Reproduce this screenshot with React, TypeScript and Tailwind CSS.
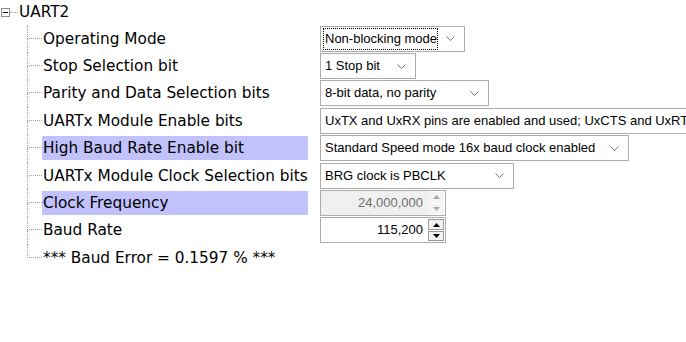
import React from "react";

type Row = {
  label: string;
  highlight?: boolean;
  control: React.ReactNode;
};

function Chevron() {
  return (
    <svg width="9" height="5" viewBox="0 0 9 5" className="shrink-0">
      <path d="M0.5 0.5 L4.5 4.5 L8.5 0.5" fill="none" stroke="#7a7a7a" strokeWidth="1" />
    </svg>
  );
}

function Combo({
  text,
  width,
  focused,
}: {
  text: string;
  width: string;
  focused?: boolean;
}) {
  return (
    <div
      className={`${width} h-[26px] bg-white border border-[#acacac] flex items-center justify-between pl-[2px] pr-[9px] gap-2 shrink-0`}
    >
      <span
        className={`whitespace-nowrap overflow-hidden px-[1px] h-[22px] leading-[20px] ${
          focused ? "border border-dotted border-black" : "flex-1 border border-transparent"
        }`}
      >
        {text}
      </span>
      <Chevron />
    </div>
  );
}

function Spinner({ value, disabled }: { value: string; disabled?: boolean }) {
  const tri = disabled ? "#a8a8a8" : "#000000";
  return (
    <div
      className={`w-[126px] h-[26px] border border-[#acacac] flex items-stretch ${
        disabled ? "bg-[#f0f0f0]" : "bg-white"
      }`}
    >
      <span
        className={`flex-1 text-right pr-[5px] leading-[24px] ${
          disabled ? "text-[#6d6d6d]" : "text-black"
        }`}
      >
        {value}
      </span>
      <div className="w-[17px] flex flex-col py-[1px] pr-[1px] gap-[1px] bg-white">
        {[0, 1].map((i) => (
          <div
            key={i}
            className={`flex-1 flex items-center justify-center ${
              disabled ? "bg-[#f4f4f4]" : "bg-[#f2f2f2] border border-[#9a9a9a]"
            }`}
          >
            <svg width="7" height="4" viewBox="0 0 7 4">
              <path d={i === 0 ? "M0 4 L3.5 0 L7 4 Z" : "M0 0 L3.5 4 L7 0 Z"} fill={tri} />
            </svg>
          </div>
        ))}
      </div>
    </div>
  );
}

const rows: Row[] = [
  {
    label: "Operating Mode",
    control: <Combo text="Non-blocking mode" width="w-[145px]" focused />,
  },
  { label: "Stop Selection bit", control: <Combo text="1 Stop bit" width="w-[96px]" /> },
  {
    label: "Parity and Data Selection bits",
    control: <Combo text="8-bit data, no parity" width="w-[169px]" />,
  },
  {
    label: "UARTx Module Enable bits",
    control: (
      <Combo
        text="UxTX and UxRX pins are enabled and used; UxCTS and UxRTS/BCLKx pins are controlled by PORT latches"
        width="w-[560px]"
      />
    ),
  },
  {
    label: "High Baud Rate Enable bit",
    highlight: true,
    control: <Combo text="Standard Speed mode 16x baud clock enabled" width="w-[309px]" />,
  },
  {
    label: "UARTx Module Clock Selection bits",
    control: <Combo text="BRG clock is PBCLK" width="w-[194px]" />,
  },
  {
    label: "Clock Frequency",
    highlight: true,
    control: <Spinner value="24,000,000" disabled />,
  },
  { label: "Baud Rate", control: <Spinner value="115,200" /> },
];

function Connector({ last }: { last?: boolean }) {
  return (
    <div className="flex w-[42px] shrink-0 h-full">
      <div className="w-[27px]" />
      <div className="w-[15px] flex flex-col">
        <div className="h-1/2 border-l border-b border-dotted border-[#a0a0a0]" />
        <div
          className={`h-1/2 ${last ? "" : "border-l border-dotted border-[#a0a0a0]"}`}
        />
      </div>
    </div>
  );
}

export default function App() {
  return (
    <div
      className="w-[686px] h-[342px] overflow-hidden bg-white text-black"
      style={{ fontFamily: "'DejaVu Sans', Verdana, sans-serif" }}
    >
      {/* root node */}
      <div className="flex items-center h-[25px] text-[15.3px]">
        <div className="ml-[1px] w-[9px] h-[9px] border border-[#8f8f8f] flex items-center justify-center">
          <div className="w-[5px] h-px bg-black" />
        </div>
        <div className="w-[8px] border-t border-dotted border-[#a0a0a0]" />
        <span className="ml-[1px]">UART2</span>
      </div>

      {rows.map((r) => (
        <div key={r.label} className="flex h-[27.4px]">
          <Connector />
          <div className="w-[278px] shrink-0 flex items-center">
            <span
              className={`text-[15.3px] whitespace-nowrap h-[24px] leading-[25px] pl-[1px] ${
                r.highlight ? "w-[266px] bg-[#c1c1fb]" : ""
              }`}
            >
              {r.label}
            </span>
          </div>
          <div
            className="flex items-center text-[13px]"
            style={{ fontFamily: "'Liberation Sans', Arial, sans-serif" }}
          >
            {r.control}
          </div>
        </div>
      ))}

      <div className="flex h-[27.4px]">
        <Connector last />
        <span className="text-[15.3px] leading-[29px] pl-[1px] whitespace-nowrap">
          *** Baud Error = 0.1597 % ***
        </span>
      </div>
    </div>
  );
}
